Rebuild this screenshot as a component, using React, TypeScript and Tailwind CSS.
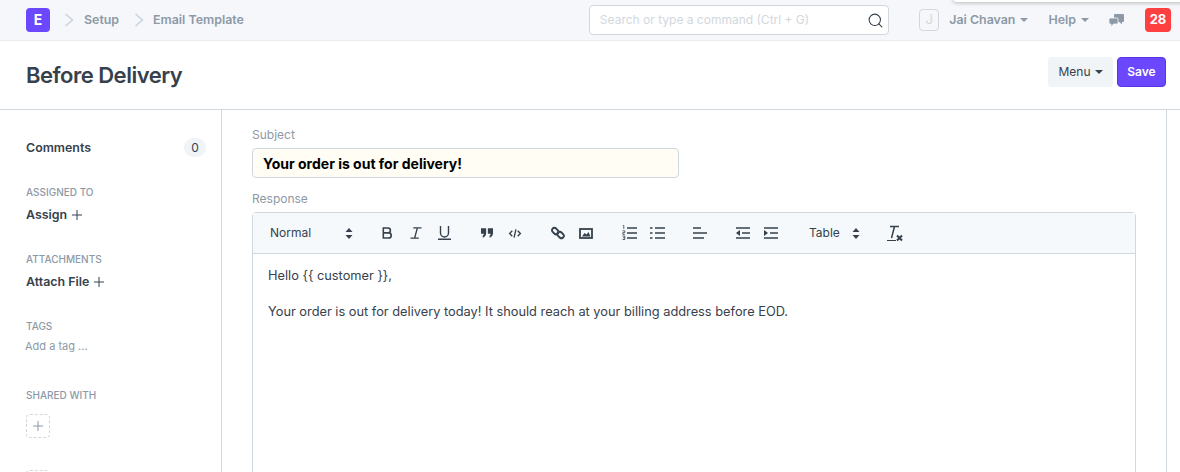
import { Plus, Search } from "lucide-react";

function Chevron() {
  return (
    <svg width="10" height="14" viewBox="0 0 10 14" fill="none" className="shrink-0">
      <path d="M1.5 1l7 6-7 6" stroke="#c8d0d9" strokeWidth="1.4" />
    </svg>
  );
}

function Caret({ color }: { color: string }) {
  return (
    <svg width="8" height="4" viewBox="0 0 8 4" className="shrink-0">
      <path d="M0 0h8L4 4z" fill={color} />
    </svg>
  );
}

function UpDown() {
  return (
    <svg width="8" height="11" viewBox="0 0 8 11" className="shrink-0">
      <path d="M4 0l3.500 4h-7zM4 11L.5 7h7z" fill="#36414c" />
    </svg>
  );
}

function ListGlyph({ children }: { children: React.ReactNode }) {
  return (
    <svg width="15" height="18" viewBox="0 0 15 18" fill="none" stroke="#36414c" strokeWidth="1.700" className="shrink-0">
      {children}
    </svg>
  );
}

function SectionLabel({ children }: { children: React.ReactNode }) {
  return <div className="text-[10px] leading-[14px] font-medium text-[#8d99a6]">{children}</div>;
}

function Sidebar() {
  return (
    <aside className="w-[222px] shrink-0 border-r border-[#d1d8dd] pl-[26px] pr-[15px] pt-[28px]">
      <div className="flex h-[19px] items-center justify-between text-[12.4px] font-semibold text-[#36414c]">
        <span className="mt-[2px]">Comments</span>
        <span className="flex h-[19px] w-[22px] items-center justify-center rounded-full bg-[#f0f4f7] text-xs font-normal">0</span>
      </div>
      <div className="mt-[28px]">
        <SectionLabel>ASSIGNED TO</SectionLabel>
        <div className="mt-[8px] flex h-4 items-center gap-[2px] text-[12.4px] font-semibold text-[#36414c]">
          Assign <Plus size={16} strokeWidth={1.5} />
        </div>
      </div>
      <div className="mt-[29px]">
        <SectionLabel>ATTACHMENTS</SectionLabel>
        <div className="mt-[8px] flex h-4 items-center gap-[2px] text-[12.4px] font-semibold text-[#36414c]">
          Attach File <Plus size={16} strokeWidth={1.5} />
        </div>
      </div>
      <div className="mt-[29px]">
        <SectionLabel>TAGS</SectionLabel>
        <div className="-ml-px mt-[6px] text-[11px] leading-[14px] text-[#8d99a6]">Add a tag ...</div>
      </div>
      <div className="mt-[35px]">
        <SectionLabel>SHARED WITH</SectionLabel>
        <div className="mt-[12px] flex h-6 w-6 items-center justify-center rounded border border-dashed border-[#d1d8dd] text-[#8d99a6]">
          <Plus size={16} strokeWidth={1.5} />
        </div>
      </div>
      <div className="mt-[32px] h-6 w-6 rounded border border-dashed border-[#d1d8dd]" />
    </aside>
  );
}

function Toolbar() {
  return (
    <div className="flex h-[41px] items-center border-b border-[#d1d8dd] bg-[#f5f9fc] pl-[17px] text-xs text-[#36414c]">
      <span className="w-[75px]">Normal</span>
      <UpDown />
      <div className="ml-[28px] flex items-center gap-[16.5px]">
        <svg width="12" height="12" viewBox="0 0 12 13" fill="none" stroke="#36414c" strokeWidth="1.700">
          <path d="M2 1h5a2.700 2.700 0 010 5.400H2zM2 6.400h5.800a2.800 2.800 0 010 5.600H2zM2 .2v12.600" />
        </svg>
        <svg width="12" height="12" viewBox="0 0 12 13" fill="none" stroke="#36414c" strokeWidth="1.500">
          <path d="M3 1h9M0 12h9M7.500 1L4.500 12" />
        </svg>
        <svg width="13" height="14" viewBox="0 0 13 14" fill="none" stroke="#36414c" strokeWidth="1.400">
          <path d="M2.500 0v7a4 4 0 008 0V0M0 13.200h13" />
        </svg>
      </div>
      <div className="ml-[30px] flex items-center gap-[15px]">
        <svg width="12" height="10" viewBox="0 0 14 11" fill="#36414c">
          <path d="M0 0h6v5.500C6 8.500 4.500 10.300 2 11V8.500c1-.4 1.300-1 1.300-2H0zM8 0h6v5.500C14 8.500 12.500 10.300 10 11V8.500c1-.4 1.300-1 1.300-2H8z" />
        </svg>
        <svg width="14" height="9" viewBox="0 0 14 10" fill="none" stroke="#36414c" strokeWidth="1.500">
          <path d="M4 2L1 5l3 3M10 2l3 3-3 3M8 .5L6 9.500" />
        </svg>
      </div>
      <div className="ml-[29px] flex items-center gap-[14px]">
        <svg width="14" height="14" viewBox="0 0 16 16" fill="none" stroke="#36414c" strokeWidth="2.200">
          <rect x="0.800" y="3" width="8" height="5.500" rx="2.700" transform="rotate(45 4.800 5.700)" />
          <rect x="7" y="7.500" width="8" height="5.500" rx="2.700" transform="rotate(45 11 10.200)" />
        </svg>
        <svg width="14" height="11" viewBox="0 0 14 11" fill="none">
          <rect x="1" y="1" width="12" height="9" stroke="#36414c" strokeWidth="1.800" />
          <path d="M3 8.500l2.500-3.500 2 1.500 2-2.500 2 4.500z" fill="#36414c" />
        </svg>
      </div>
      <div className="ml-[29px] flex items-center gap-[13px]">
        <ListGlyph>
          <path d="M5 4h10M5 9h10M5 14h10" />
          <path d="M.8 1.500h1v3.500M.5 6.800h2.300v1.800H.8v1.800h2M.5 12h2.300v3.500H.5M1 13.700h1.800" strokeWidth="0.800" />
        </ListGlyph>
        <ListGlyph>
          <path d="M5 4h10M5 9h10M5 14h10M0 4h2.500M0 9h2.500M0 14h2.500" />
        </ListGlyph>
      </div>
      <div className="ml-[28px]">
        <ListGlyph>
          <path d="M0 4h8M0 9h14M0 14h11" />
        </ListGlyph>
      </div>
      <div className="ml-[28px] flex items-center gap-[13px]">
        <ListGlyph>
          <path d="M0 4h14M6 9h8M0 14h14" />
          <path d="M4 6v6L0 9z" fill="#36414c" stroke="none" />
        </ListGlyph>
        <ListGlyph>
          <path d="M0 4h14M6 9h8M0 14h14" />
          <path d="M0 6v6l4-3z" fill="#36414c" stroke="none" />
        </ListGlyph>
      </div>
      <span className="ml-[30px] w-[43px]">Table</span>
      <UpDown />
      <svg width="16" height="17" viewBox="0 0 16 17" fill="none" stroke="#36414c" className="ml-[27px]">
        <path d="M3 1.500h9M7.500 1.500L4.500 13" strokeWidth="1.500" />
        <path d="M0 15.500h9" strokeWidth="1" />
        <path d="M10 10.500l5 5M15 10.500l-5 5" strokeWidth="2" />
      </svg>
    </div>
  );
}

export default function App() {
  return (
    <div className="relative h-[472px] w-[1180px] overflow-hidden bg-white font-['Inter',sans-serif] text-[#36414c]">
      {/* dropdown peeking in from above the navbar */}
      <div className="absolute -top-[20px] left-[953px] z-10 h-[22px] w-[290px] rounded bg-white shadow-[0_1px_4px_rgba(0,0,0,0.25)]" />

      <header className="flex h-[41px] items-center border-b border-[#e8ebef] bg-[#f5f7fa] pl-[26px] text-[12.4px] font-semibold text-[#8d99a6]">
        <div className="flex h-6 w-6 items-center justify-center rounded bg-[#6b48ff] text-sm font-bold text-white">E</div>
        <div className="ml-[14px]"><Chevron /></div>
        <span className="ml-[10px]">Setup</span>
        <div className="ml-[15px]"><Chevron /></div>
        <span className="ml-[9px]">Email Template</span>

        <div className="ml-[345px] flex h-[30px] w-[300px] items-center justify-between rounded border border-[#d1d8dd] bg-white pl-[10px] pr-[4px]">
          <span className="text-xs font-normal text-[#d1d8dd]">Search or type a command (Ctrl + G)</span>
          <Search size={17} strokeWidth={1.5} color="#36414c" />
        </div>

        <div className="ml-auto flex items-center pr-[9px]">
          <div className="flex h-[22px] w-5 items-center justify-center rounded border border-[#d1d8dd] font-normal text-[#d1d8dd]">J</div>
          <span className="ml-[10px]">Jai Chavan</span>
          <div className="ml-[5px]"><Caret color="#8d99a6" /></div>
          <span className="ml-[20px]">Help</span>
          <div className="ml-[5px]"><Caret color="#8d99a6" /></div>
          <svg width="15" height="13" viewBox="0 0 15 13" fill="#8d99a6" className="ml-[20px]">
            <path d="M6 0h8a1 1 0 011 1v6a1 1 0 01-1 1h-1v2.500L10.500 8H6a1 1 0 01-1-1V1a1 1 0 011-1z" />
            <path d="M1 4h7a1 1 0 011 1v4a1 1 0 01-1 1H4.500L2 13v-3H1a1 1 0 01-1-1V5a1 1 0 011-1z" stroke="#f5f7fa" strokeWidth="0.800" />
          </svg>
          <div className="ml-[21px] flex h-6 w-[26px] items-center justify-center rounded bg-[#ff4040] text-[13px] font-bold text-white">28</div>
        </div>
      </header>

      <div className="flex h-[69px] items-start justify-between border-b border-[#d1d8dd] pl-[26px] pr-[14px]">
        <h1 className="mt-[19px] text-[22px] leading-[30px] font-semibold tracking-[-0.5px] text-[#36414c]">Before Delivery</h1>
        <div className="mt-[16px] flex gap-1 text-xs">
          <button className="flex h-[30px] w-[65px] items-center justify-center gap-1 rounded bg-[#f0f4f7] text-[#36414c]">
            Menu <Caret color="#36414c" />
          </button>
          <button className="h-[30px] w-[49px] rounded border border-[#5a33e6] bg-[#6b48ff] font-semibold text-white">Save</button>
        </div>
      </div>

      <div className="flex h-[362px]">
        <Sidebar />
        <main className="w-[945px] border-r border-[#d1d8dd] pl-[30px] pr-[30px] pt-[17px]">
          <div className="text-xs leading-4 text-[#8d99a6]">Subject</div>
          <div className="mt-[5px] flex h-[30px] w-[427px] items-center rounded border border-[#d1d8dd] bg-[#fffdf4] pl-[10px] pt-[2px] text-sm font-bold text-black">
            Your order is out for delivery!
          </div>
          <div className="mt-[13px] text-xs leading-4 text-[#8d99a6]">Response</div>
          <div className="mt-[5px] h-[300px] rounded-t border border-[#d1d8dd]">
            <Toolbar />
            <div className="px-[15px] pt-[13px] text-[12.8px] leading-[18px] text-[#36414c]">
              <p>Hello {"{{ customer }}"},</p>
              <p className="mt-[18px]">Your order is out for delivery today! It should reach at your billing address before EOD.</p>
            </div>
          </div>
        </main>
      </div>
    </div>
  );
}
